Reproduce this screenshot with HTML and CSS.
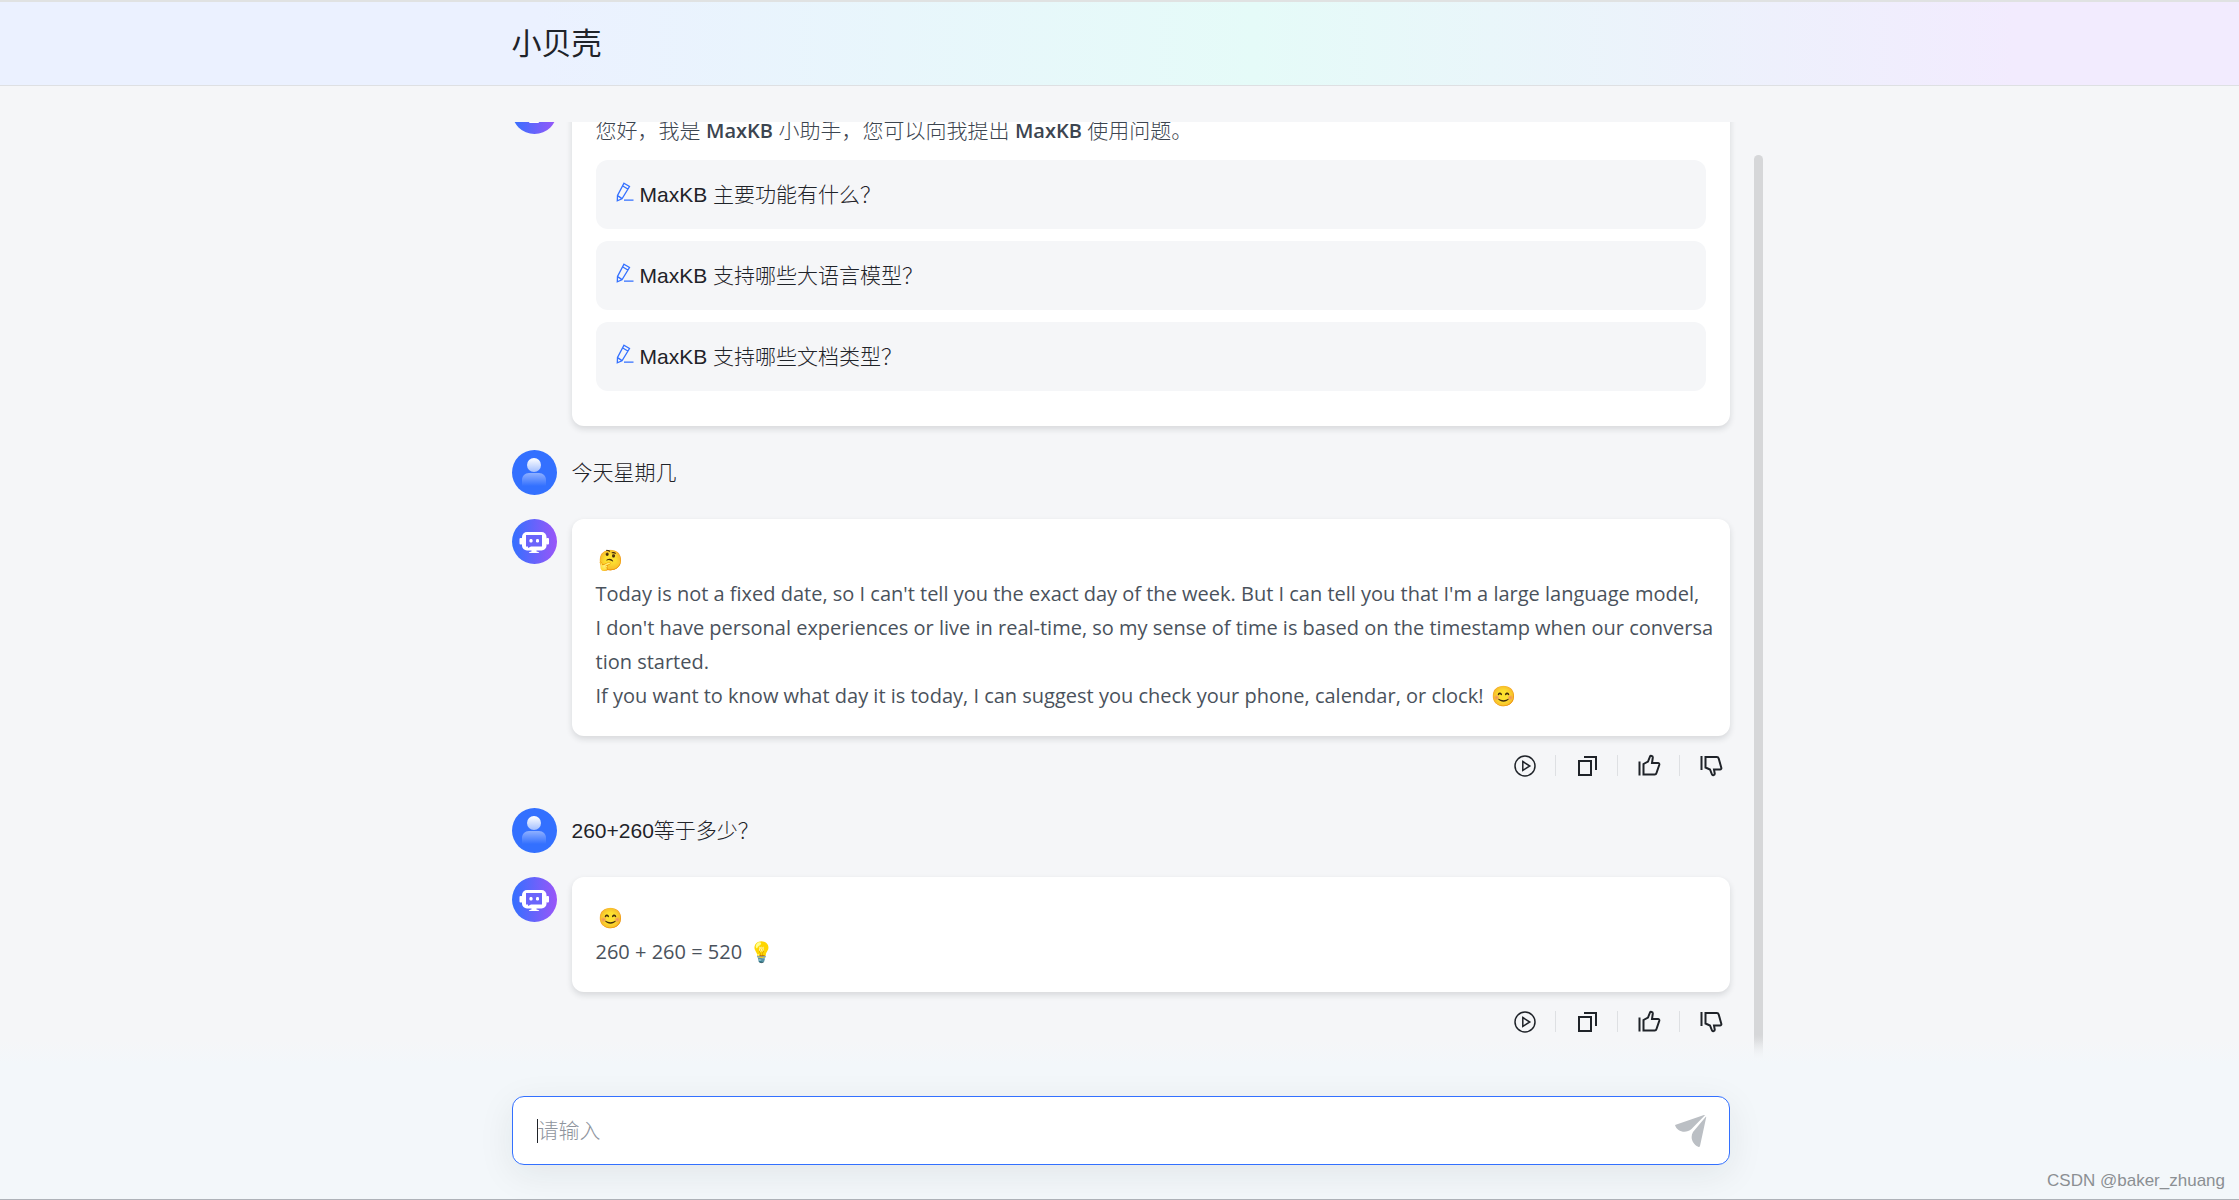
FILE: index.html
```html
<!DOCTYPE html>
<html lang="zh-CN">
<head>
  <meta charset="UTF-8">
  <meta name="viewport" content="width=device-width, initial-scale=1.0">
  <title>小贝壳</title>
  <link rel="stylesheet" href="styles.css">
</head>
<body>
  <!-- 公用图标 -->
  <svg class="icon-defs" aria-hidden="true">
    <defs>
      <linearGradient id="botBg" x1="0" y1="0" x2="1" y2="0">
        <stop offset="0" stop-color="#3370ff"/>
        <stop offset="1" stop-color="#9a56f8"/>
      </linearGradient>
      <linearGradient id="headBg" x1="0" y1="0" x2="0" y2="1">
        <stop offset="0" stop-color="#fff"/>
        <stop offset="1" stop-color="#a3bfff"/>
      </linearGradient>
      <linearGradient id="bodyBg" x1="0" y1="0" x2="0" y2="1">
        <stop offset="0" stop-color="#8fb0ff"/>
        <stop offset="1" stop-color="#3370ff"/>
      </linearGradient>
    </defs>
    <symbol id="bot" viewBox="0 0 45 45">
      <circle cx="22.500" cy="22.500" r="22.500" fill="url(#botBg)"/>
      <rect x="7.500" y="19" width="3" height="6.500" rx="1" fill="#fff"/>
      <rect x="34" y="19" width="3" height="6.500" rx="1" fill="#fff"/>
      <rect x="10" y="13" width="24.500" height="18.500" rx="5" fill="#fff"/>
      <path d="M14 16h16v11.500H19l-3 1.500v-1.500h-2z" fill="#6a64fb"/>
      <rect x="17.500" y="20" width="3" height="3.500" rx="1.200" fill="#fff"/>
      <rect x="24" y="20" width="3" height="3.500" rx="1.200" fill="#fff"/>
      <path d="M19.500 31h5v1.500c1.500.2 2.500.8 2.800 1.500h-10.500c.3-.7 1.200-1.300 2.700-1.500z" fill="#fff"/>
    </symbol>
    <symbol id="user" viewBox="0 0 45 45">
      <circle cx="22.500" cy="22.500" r="22.500" fill="#3370ff"/>
      <circle cx="22" cy="15" r="7" fill="url(#headBg)"/>
      <path d="M10 36v-6c0-4 3-7 7-7h10c4 0 7 3 7 7v6z" fill="url(#bodyBg)"/>
    </symbol>
    <symbol id="pencil" viewBox="0 0 18 20">
      <path d="M8 1.200l5.500 3.300-7.500 12.300-4.700 2 .2-5.300zM6.800 4l5 3M1.600 13.600l4.400 3M8 18.200h9.500"/>
    </symbol>
    <symbol id="play" viewBox="0 0 24 24">
      <circle cx="12" cy="12" r="10"/>
      <path d="M9.800 7.500l7 4.500-7 4.500z"/>
    </symbol>
    <symbol id="copy" viewBox="0 0 24 24">
      <path d="M4 7h12v14H4zM9 3h12v13"/>
    </symbol>
    <symbol id="like" viewBox="0 0 24 24">
      <path d="M2.500 7.500v14M6.500 20.500V10l4.500-2.500 2-5c.4-1 3-.8 2.800 1.200L15 9h6c1 0 1.500.8 1.300 1.700l-2.800 8.300c-.3 1-.9 1.500-1.800 1.500z"/>
    </symbol>
    <symbol id="dislike" viewBox="0 0 24 24">
      <path d="M2.500 2v14M6.500 3v10.500l4.500 2 2 5c.5 1.200 3 .8 2.700-1.200L15 15.500h6c1 0 1.600-.8 1.300-1.800L19.700 4.500c-.3-1-.9-1.500-1.800-1.500z"/>
    </symbol>
    <symbol id="send" viewBox="0 0 32 32">
      <path d="M0 10L29 0c.8-.2 1 .3.500.8L16.500 14C11 19 2 17 0 10zM31.200 2.200L25 31c-.3 1-1 1.200-1.800.8C17 28.500 15 22 18 17L30.600 2c.3-.4.700-.3.600.2z"/>
    </symbol>
  </svg>

  <header>
    <h1>小贝壳</h1>
  </header>

  <main>
    <div class="messages">
      <div class="message bot">
        <svg class="avatar"><use href="#bot"/></svg>
        <div class="card">
          <p class="greeting">您好，我是 <strong>MaxKB</strong> 小助手，您可以向我提出 <strong>MaxKB</strong> 使用问题。</p>
          <button class="question"><svg><use href="#pencil"/></svg>MaxKB 主要功能有什么？</button>
          <button class="question"><svg><use href="#pencil"/></svg>MaxKB 支持哪些大语言模型？</button>
          <button class="question"><svg><use href="#pencil"/></svg>MaxKB 支持哪些文档类型？</button>
        </div>
      </div>

      <div class="message user">
        <svg class="avatar"><use href="#user"/></svg>
        <p>今天星期几</p>
      </div>

      <div class="message bot">
        <svg class="avatar"><use href="#bot"/></svg>
        <div class="card">
          <p><span class="emoji">🤔</span><br>
          Today is not a fixed date, so I can't tell you the exact day of the week. But I can tell you that I'm a large language model,<br>
          I don't have personal experiences or live in real-time, so my sense of time is based on the timestamp when our conversa<br>
          tion started.<br>
          If you want to know what day it is today, I can suggest you check your phone, calendar, or clock! <span class="emoji">😊</span></p>
        </div>
      </div>
      <div class="actions">
        <button aria-label="播放"><svg class="thin"><use href="#play"/></svg></button>
        <button aria-label="复制"><svg><use href="#copy"/></svg></button>
        <button aria-label="赞同"><svg><use href="#like"/></svg></button>
        <button aria-label="反对"><svg><use href="#dislike"/></svg></button>
      </div>

      <div class="message user">
        <svg class="avatar"><use href="#user"/></svg>
        <p>260+260等于多少？</p>
      </div>

      <div class="message bot">
        <svg class="avatar"><use href="#bot"/></svg>
        <div class="card">
          <p><span class="emoji">😊</span><br>
          260 + 260 = 520 <span class="emoji">💡</span></p>
        </div>
      </div>
      <div class="actions">
        <button aria-label="播放"><svg class="thin"><use href="#play"/></svg></button>
        <button aria-label="复制"><svg><use href="#copy"/></svg></button>
        <button aria-label="赞同"><svg><use href="#like"/></svg></button>
        <button aria-label="反对"><svg><use href="#dislike"/></svg></button>
      </div>
    </div>
    <div class="scrollbar"></div>
  </main>

  <footer>
    <form class="chat-form">
      <input type="text" aria-label="请输入" placeholder="请输入" autofocus>
      <button type="submit" aria-label="发送"><svg><use href="#send"/></svg></button>
    </form>
    <span class="watermark">CSDN @baker_zhuang</span>
  </footer>
</body>
</html>
```
FILE: styles.css
```css
* {
  margin: 0;
  padding: 0;
  box-sizing: border-box;
}

body {
  display: flex;
  flex-direction: column;
  height: 100vh;
  overflow: hidden;
  font-family: "Liberation Sans", "Noto Sans CJK SC", sans-serif;
  font-size: 21px;
  font-weight: 300;
  line-height: 34px;
  color: #1f2329;
  background-color: #f5f6f8;
}

button {
  font: inherit;
  color: inherit;
  background: none;
  border: none;
  cursor: pointer;
}

svg {
  display: block;
  fill: none;
  stroke: none;
}

.icon-defs {
  position: absolute;
  width: 0;
  height: 0;
}

header {
  flex: none;
  padding: 22px 0 21px 2px;
  border-top: 2px solid #e0e2e2;
  border-bottom: 1px solid #dee0e3;
  background: linear-gradient(90deg, #ebf1ff 24%, #e5fbf8 56%, #f2ebfe 90%);
}

header h1 {
  max-width: 1218px;
  margin: 0 auto;
  font-size: 30px;
  font-weight: 400;
  line-height: 40px;
}

/* 对话区 */
main {
  flex: 1;
  min-height: 0;
  display: flex;
  justify-content: center;
  padding: 36px 0 0 2px;
}

.messages {
  display: flex;
  flex-direction: column;
  justify-content: flex-end;
  width: 1242px;
  padding: 0 12px;
  overflow: hidden;
}

.message {
  display: flex;
  flex: none;
  gap: 15px;
  margin-bottom: 24px;
}

.message.user {
  align-items: center;
}

.message:has(+ .actions) {
  margin-bottom: 0;
}

.avatar {
  flex: none;
  width: 45px;
  height: 45px;
}

.card {
  flex: 1;
  min-width: 0;
  padding: 24px 24px 23px;
  border-radius: 12px;
  background-color: #fff;
  box-shadow: 0 3px 6px rgba(31, 35, 41, 0.14);
  color: #4a525c;
}

.card p {
  font-family: "Open Sans", "Noto Sans CJK SC", sans-serif;
  font-size: 20px;
  font-weight: 400;
  white-space: nowrap;
}

.card .greeting {
  font-size: 21px;
  font-weight: 300;
  color: #3c4550;
}

.card strong {
  font-size: 20px;
  font-weight: 600;
}

.emoji {
  margin: 0 2px;
}

.question {
  display: flex;
  align-items: center;
  gap: 6px;
  width: 100%;
  height: 69px;
  margin: 12px 0;
  padding: 0 20px;
  border-radius: 12px;
  background-color: #f5f6f8;
  color: #1f2329;
}

.question + .question {
  margin-top: 0;
}

.question svg {
  width: 18px;
  height: 20px;
  margin-bottom: 6px;
  stroke: #3370ff;
  stroke-width: 1.3;
}

.actions {
  display: flex;
  flex: none;
  justify-content: flex-end;
  padding: 19px 7px 8px 0;
}

.actions + .message {
  margin-top: 24px;
}

.actions button {
  height: 21px;
  display: flex;
  align-items: center;
}

.actions button + button {
  margin-left: 18px;
  padding-left: 19px;
  border-left: 1px solid #dee0e3;
}

.actions svg {
  width: 24px;
  height: 24px;
  stroke: #1f2329;
  stroke-width: 2;
}

.actions .thin {
  stroke-width: 1.5;
}

.scrollbar {
  position: absolute;
  top: 155px;
  bottom: 141px;
  left: calc(50% + 634px);
  width: 9px;
  border-radius: 5px 5px 0 0;
  background: linear-gradient(#d6d7d9 calc(100% - 24px), transparent);
}

/* 输入区 */
footer {
  flex: none;
  position: relative;
  padding: 56px 0 34px 2px;
  border-bottom: 1px solid #aeb2b8;
  background: linear-gradient(rgba(243, 247, 250, 0), #f3f7fa 24px);
}

.chat-form {
  display: flex;
  align-items: center;
  max-width: 1218px;
  height: 69px;
  margin: 0 auto;
  padding: 0 22px 0 24px;
  border: 1px solid #3370ff;
  border-radius: 12px;
  background-color: #fff;
  box-shadow: 0 9px 36px rgba(31, 35, 41, 0.08);
}

.chat-form input {
  flex: 1;
  height: 24px;
  border: none;
  border-left: 1px solid #1f2329;
  outline: none;
  background: none;
  font: inherit;
  line-height: 24px;
  color: #1f2329;
  caret-color: transparent;
}

.chat-form input::placeholder {
  color: #8f959e;
}

.chat-form svg {
  width: 32px;
  height: 32px;
  fill: #bbbfc4;
}

.watermark {
  position: absolute;
  right: 14px;
  bottom: 8px;
  font-size: 17px;
  line-height: 20px;
  color: #8b8f93;
}
```
